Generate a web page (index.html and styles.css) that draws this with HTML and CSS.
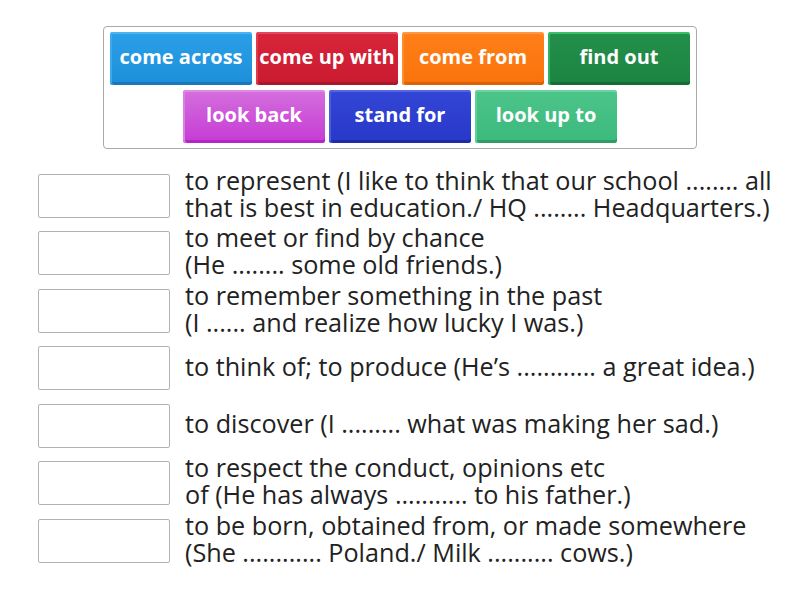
FILE: index.html
```html
<!DOCTYPE html>
<html lang="en">
<head>
<meta charset="utf-8">
<title>Match up</title>
<link rel="stylesheet" href="styles.css">
</head>
<body>
<div class="bank">
  <div class="tile blue">come across</div>
  <div class="tile red">come up with</div>
  <div class="tile orange">come from</div>
  <div class="tile dgreen">find out</div>
  <div class="tile purple">look back</div>
  <div class="tile navy">stand for</div>
  <div class="tile mint">look up to</div>
</div>
<div class="items">
  <div class="row"><div class="slot"></div><div class="def">to represent (I like to think that our school ........ all<br>that is best in education./ HQ ........ Headquarters.)</div></div>
  <div class="row"><div class="slot"></div><div class="def">to meet or find by chance<br>(He ........ some old friends.)</div></div>
  <div class="row"><div class="slot"></div><div class="def">to remember something in the past<br>(I ...... and realize how lucky I was.)</div></div>
  <div class="row"><div class="slot"></div><div class="def">to think of; to produce (He’s ............ a great idea.)</div></div>
  <div class="row"><div class="slot"></div><div class="def">to discover (I ......... what was making her sad.)</div></div>
  <div class="row"><div class="slot"></div><div class="def">to respect the conduct, opinions etc<br>of (He has always ........... to his father.)</div></div>
  <div class="row"><div class="slot"></div><div class="def">to be born, obtained from, or made somewhere<br>(She ............ Poland./ Milk .......... cows.)</div></div>
</div>
</body>
</html>
```
FILE: styles.css
```css
html, body {
  margin: 0;
  padding: 0;
  background: #fff;
}
body {
  font-family: "Open Sans", "Noto Sans", sans-serif;
  color: #222;
}
.bank {
  width: 594px;
  box-sizing: border-box;
  margin: 26px auto 0;
  border: 1px solid #aaa;
  border-radius: 4px;
  padding: 5px 6px;
  display: flex;
  flex-wrap: wrap;
  justify-content: center;
  gap: 5px 4px;
}
.tile {
  width: 142px;
  height: 53px;
  box-sizing: border-box;
  border-radius: 3px;
  color: #fff;
  font-weight: 700;
  font-size: 20px;
  display: flex;
  align-items: center;
  justify-content: center;
  padding-bottom: 4px;
  white-space: nowrap;
}
.blue { background: linear-gradient(#2aa0e8, #1d8fd9); box-shadow: inset 0 2px 0 #4fb3f0, inset 2px 0 0 #3ba9ee, inset 0 -3px 0 #1878bb; }
.red { background: linear-gradient(#d8253a, #c91b30); box-shadow: inset 0 2px 0 #e4485c, inset 2px 0 0 #df3a4e, inset 0 -3px 0 #a9172a; }
.orange { background: linear-gradient(#ff7f18, #fa730b); box-shadow: inset 0 2px 0 #ff9a44, inset 2px 0 0 #ff8e30, inset 0 -3px 0 #dc6208; }
.dgreen { background: linear-gradient(#23904a, #1c8443); box-shadow: inset 0 2px 0 #3cbf6a, inset 2px 0 0 #33b061, inset 0 -3px 0 #166c36; }
.purple { background: linear-gradient(#d46fdd, #c53bd4); box-shadow: inset 0 2px 0 #de8ae6, inset 2px 0 0 #da80e2, inset 0 -3px 0 #b524c6; }
.navy { background: linear-gradient(#3346d6, #2838c8); box-shadow: inset 0 2px 0 #5466e4, inset 2px 0 0 #4a5de0, inset 0 -3px 0 #1f2ba8; }
.mint { background: linear-gradient(#4cc58a, #3cb97c); box-shadow: inset 0 2px 0 #6dd3a1, inset 2px 0 0 #62ce99, inset 0 -3px 0 #2f9c66; }

.items {
  margin: 18px 0 0 38px;
  display: grid;
  grid-auto-rows: 57.5px;
}
.row {
  display: flex;
  align-items: center;
  gap: 15px;
}
.slot {
  flex: none;
  width: 132px;
  height: 44px;
  box-sizing: border-box;
  border: 1px solid #b3b3b3;
  border-radius: 2px;
  background: #fff;
}
.def {
  font-size: 25.2px;
  line-height: 27px;
  margin-bottom: 4px;
  white-space: nowrap;
  color: #222;
}
```
